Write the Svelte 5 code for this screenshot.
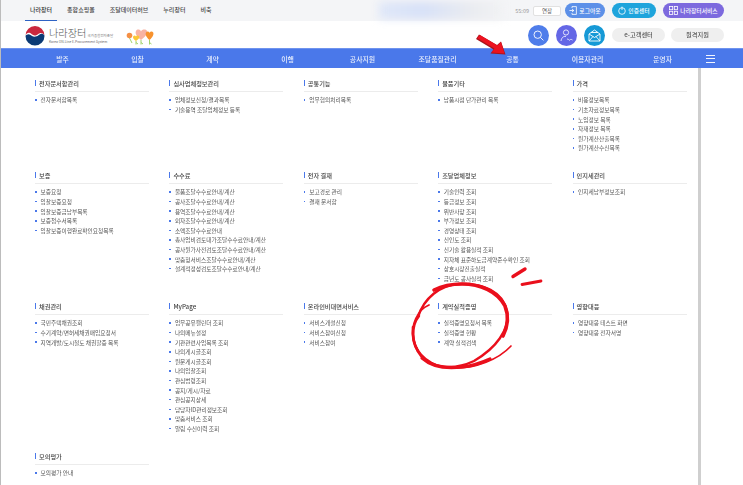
<script>
  const tabs = ["나라장터", "종합쇼핑몰", "조달데이터허브", "누리장터", "비축"];
  const nav = ["발주", "입찰", "계약", "이행", "공사지원", "조달품질관리", "공통", "이용자관리", "운영자"];

  const groups = [
    { title: "전자문서함관리", items: ["전자문서함목록"] },
    { title: "심사업체정보관리", items: ["업체정보신청/결과목록", "기술용역 조달업체정보 등록"] },
    { title: "공통기능", items: ["업무협의처리목록"] },
    { title: "물품기타", items: ["납품시점 단가관리 목록"] },
    { title: "가격", items: ["비용정보목록", "기초자료정보목록", "노임정보 목록", "자재정보 목록", "원가계산산출목록", "원가계산수신목록"] },
    { title: "보증", items: ["보증요청", "입찰보증요청", "입찰보증금납부목록", "보증접수서목록", "입찰보증이행완료확인요청목록"] },
    {
      title: "수수료",
      items: [
        "물품조달수수료안내/계산",
        "공사조달수수료안내/계산",
        "용역조달수수료안내/계산",
        "외자조달수수료안내/계산",
        "소액조달수수료안내",
        "총사업비검토대가조달수수료안내/계산",
        "공사원가사전검토조달수수료안내/계산",
        "맞춤형서비스조달수수료안내/계산",
        "설계적정성검토조달수수료안내/계산"
      ]
    },
    { title: "전자 결재", items: ["보고경로 관리", "결재 문서함"] },
    {
      title: "조달업체정보",
      items: [
        "기술인력 조회",
        "등급정보 조회",
        "위반사항 조회",
        "부가정보 조회",
        "경영상태 조회",
        "신인도 조회",
        "신기술 활용실적 조회",
        "지자체 표준하도급계약준수확인 조회",
        "상호시장진출실적",
        "금년도 공사실적 조회"
      ]
    },
    { title: "인지세관리", items: ["인지세납부정보조회"] },
    { title: "채권관리", items: ["국민주택채권조회", "수기계약/면허세채권매입요청서", "지역개발/도시철도 채권할증 목록"] },
    {
      title: "MyPage",
      items: [
        "업무공유캘린더 조회",
        "나의메뉴설정",
        "기관관련사업목록 조회",
        "나의게시글조회",
        "원문게시글조회",
        "나의입찰조회",
        "관심법령조회",
        "공지/게시/자료",
        "관심공지상세",
        "담당자ID관리정보조회",
        "맞춤서비스 조회",
        "알림 수신이력 조회"
      ]
    },
    { title: "온라인비대면서비스", items: ["서비스개설신청", "서비스참여신청", "서비스참여"] },
    { title: "계약실적증명", items: ["실적증명요청서 목록", "실적증명 현황", "계약 실적검색"] },
    { title: "영향대응", items: ["영향대응 테스트 화면", "영향대응 전자서명"] },
    { title: "모의평가", items: ["모의평가 안내"] }
  ];
</script>

<div class="page">
  <div class="topbar">
    <div class="tabs">
      {#each tabs as tab, i}
        <span class="tab" class:active={i === 0}>{tab}</span>
      {/each}
    </div>
    <div class="hidden-name"></div>
    <div class="session">
      <span class="timer">55:09</span>
      <span class="extend">연장</span>
      <span class="pill logout">
        <svg width="8" height="9" viewBox="0 0 8 9" fill="none" stroke="#fff" stroke-width="0.8">
          <path d="M3 2V.6h4.4v7.8H3V7M.4 4.5h4.4M3 3l1.8 1.5L3 6" />
        </svg>
        로그아웃
      </span>
      <span class="pill cert">
        <svg width="8" height="9" viewBox="0 0 8 9" fill="none" stroke="#fff" stroke-width="0.8">
          <circle cx="4" cy="5" r="3.3" />
          <path d="M4 .6V4" />
        </svg>
        인증센터
      </span>
      <span class="pill service">
        <svg width="9" height="9" viewBox="0 0 9 9" fill="none" stroke="#fff" stroke-width="0.8">
          <rect x=".5" y=".5" width="3.2" height="3.2" />
          <rect x="5.3" y=".5" width="3.2" height="3.2" />
          <rect x=".5" y="5.3" width="3.2" height="3.2" />
          <rect x="5.3" y="5.3" width="3.2" height="3.2" />
        </svg>
        나라장터서비스
      </span>
    </div>
  </div>

  <header class="header">
    <div class="logo">
      <svg class="emblem" width="20" height="20" viewBox="0 0 20 20">
        <circle cx="10" cy="10" r="9.5" fill="#fff" />
        <path d="M.6 9.5A9.4 9.4 0 0 1 19.4 9.5C18.6 7.4 16.6 6.6 14.8 7.2 13 7.8 12.4 9 10.6 9.4 7.6 10 6.4 7.2 4.4 6.8 2.6 6.5 1.2 7.6.6 9.5Z" fill="#c9283e" />
        <path d="M.5 10A9.5 9.5 0 0 0 19.5 10C19.4 8.6 18 7.6 16.2 7.8 14.4 8 13.6 10 10.8 10.6 7.4 11.2 6.2 8.6 4.4 8.4 2.4 8.2 .9 9 .5 10Z" fill="#0b3a75" />
      </svg>
      <div class="wordmark">
        <div class="wordmark-top"><span class="brand">나라장터</span><span class="brand-sub">국가종합전자조달</span></div>
        <div class="brand-en">Korea ON-Line E-Procurement System</div>
      </div>
      <svg class="flowers" width="28" height="17" viewBox="0 0 28 17">
        <path d="M10 13V16.500M15 12V16.500M23.500 12V16.500M3.500 10 6 15M12 16 10 14.500M17 16 15 14.500M25.500 16 23.500 14.500" stroke="#a2d36c" stroke-width="1" fill="none" />
        <path d="M15 12C10 8 9 5 10 3 11 1 14 1 15 3.500 16 1 20 1 21 3 22 5 20 8 15 12Z" fill="#f8b3a3" />
        <path d="M23.500 12C20 9 19 6 20 4.500 21 3 23 3 23.500 5 24 3 26.500 3 27.200 4.500 28 6 27 9 23.500 12Z" fill="#f7922e" />
        <path d="M10 13C7 11 6.500 9 7.500 8 8.500 7 9.500 7.500 10 8.500 10.500 7.500 12 7 13 8 14 9 13 11 10 13Z" fill="#fcc734" />
        <circle cx="3.500" cy="7.500" r="2.800" fill="#f58f45" />
      </svg>
    </div>
    <div class="tools">
      <span class="round search">
        <svg width="11" height="11" viewBox="0 0 11 11" fill="none" stroke="#fff" stroke-width="0.9">
          <circle cx="4.700" cy="4.700" r="3.700" />
          <path d="M7.500 7.500 10.400 10.400" />
        </svg>
      </span>
      <span class="round user">
        <svg width="13" height="13" viewBox="0 0 13 13" fill="none" stroke="#fff" stroke-width="0.8">
          <circle cx="6" cy="3.500" r="2.600" />
          <path d="M1 12C1.500 8.500 3.500 7 6 7.500M7 10.500C8 9.500 8.500 10.500 9 11 9.500 11.500 10 11 10.500 10.500 11 10 11.500 10.500 12.500 11" />
        </svg>
      </span>
      <span class="round mail">
        <svg width="13" height="13" viewBox="0 0 13 13" fill="none" stroke="#fff" stroke-width="0.9">
          <path d="M1 5 6.500 1 12 5V12H1ZM1 5 6.500 8.500 12 5M1 12 5 7.500M12 12 8 7.500" />
          <path d="M3 3.500H10" />
        </svg>
      </span>
      <span class="soft first">e-고객센터</span>
      <span class="soft">원격지원</span>
    </div>
  </header>

  <nav class="nav">
    {#each nav as item}
      <span class="nav-item">{item}</span>
    {/each}
    <span class="burger"><i></i><i></i><i></i></span>
  </nav>

  <main class="menu">
    {#each groups as group}
      <section class="group">
        <h3>{group.title}</h3>
        <ul>
          {#each group.items as item}
            <li>{item}</li>
          {/each}
        </ul>
      </section>
    {/each}
  </main>

  <!-- red pen marks drawn over the screenshot -->
  <svg class="marks" width="743" height="485" viewBox="0 0 743 485" fill="none" stroke="#ea0f1c" stroke-linecap="round">
    <path d="M479 34.500 497 45 501 41.500 505.500 54.500 490.500 53.500 493.500 49.500 476 39Z" fill="#a8141c" stroke="none" />
    <path d="M480 35 497.500 45.500 501 42 504.500 53.500 491.500 52.500 494.500 48.500 477 38Z" fill="#ec1220" stroke="none" />
    <path d="M418 317C424 298 440 285 459 284 483 282.500 503 292 507 311 510 330 496 348 474 361 455 370 432 369 421 356 411 343 411 326 419 316" stroke-width="2.400" />
    <path d="M434 290C444 285 452 284 462 284 480 284 497 291 505 306 509 316 508 326 503 336" stroke-width="3.600" />
    <path d="M429 305C417 310 411 325 413 338 416 354 431 367 452 368 476 369 499 359 511 346" stroke-width="1.700" />
    <path d="M422 358C432 367 446 369 462 367 472 366 481 363 490 359" stroke-width="3.200" />
    <path d="M413 327C412 338 414 345 418 351" stroke-width="2.600" />
    <path d="M513 276.500 525 269" stroke-width="3.400" />
    <path d="M522 284.500 541 281" stroke-width="2.800" />
  </svg>
</div>

<style>
  :global(body) {
    margin: 0;
    background: #fff;
  }

  .page {
    position: relative;
    width: 743px;
    height: 485px;
    overflow: hidden;
    box-sizing: border-box;
    border-left: 1px solid #bcbcbc;
    font-family: "Noto Sans CJK KR", "Noto Sans", sans-serif;
    color: #444;
    filter: blur(0.4px);
  }

  .topbar {
    position: relative;
    display: flex;
    justify-content: space-between;
    align-items: flex-start;
    height: 21px;
    background: #f4f5f7;
    padding-right: 19px;
  }

  .tabs {
    display: flex;
    gap: 5px;
    padding-left: 24px;
  }

  .tab {
    height: 20px;
    line-height: 20px;
    padding: 0 5px;
    font-size: 6px;
    font-weight: 500;
    color: #444;
  }

  .tab.active {
    border-bottom: 1px solid #2f63c4;
    color: #333;
  }

  .hidden-name {
    position: absolute;
    left: 378px;
    top: 2px;
    width: 124px;
    height: 17px;
    background: linear-gradient(90deg, #dfe7f8, #d6e0f7 35%, #e9ebef 75%, #f1f2f4);
    filter: blur(4px);
  }

  .session {
    display: flex;
    align-items: center;
    height: 21px;
  }

  .timer {
    font-size: 5.500px;
    color: #999;
    margin-right: 4px;
  }

  .extend {
    box-sizing: border-box;
    width: 28px;
    height: 10px;
    line-height: 8px;
    margin-right: 4px;
    text-align: center;
    font-size: 5.500px;
    color: #555;
    background: #fff;
    border: 1px solid #e1e1e1;
    border-radius: 2px;
  }

  .pill {
    display: flex;
    align-items: center;
    justify-content: center;
    gap: 2px;
    height: 15px;
    border-radius: 8px;
    font-size: 5.800px;
    font-weight: 500;
    color: #fff;
  }

  .logout {
    width: 40px;
    margin-right: 7px;
    background: #5c90e8;
  }

  .cert {
    width: 44px;
    margin-right: 7px;
    background: #1ea4dc;
  }

  .service {
    width: 61px;
    background: #7c69de;
  }

  .header {
    display: flex;
    justify-content: space-between;
    align-items: center;
    height: 27px;
    padding: 0 19px 0 24px;
    background: #fff;
  }

  .logo {
    display: flex;
    align-items: center;
  }

  .emblem {
    margin-top: 3px;
  }

  .wordmark {
    margin: 2px 0 0 4px;
    width: 70px;
    color: #555;
  }

  .wordmark-top {
    display: flex;
    align-items: flex-end;
    height: 12px;
  }

  .brand {
    font-size: 10.200px;
    font-weight: 300;
    line-height: 12px;
    color: #555;
  }

  .brand-sub {
    font-size: 3.500px;
    line-height: 6px;
    margin-left: 1px;
    white-space: nowrap;
    color: #777;
  }

  .brand-en {
    font-size: 3.300px;
    line-height: 5px;
    white-space: nowrap;
    color: #666;
  }

  .flowers {
    margin: 4px 0 0 7px;
  }

  .tools {
    display: flex;
    align-items: center;
    margin-top: 1px;
  }

  .round {
    display: flex;
    align-items: center;
    justify-content: center;
    width: 21px;
    height: 21px;
    margin-right: 7px;
    border-radius: 50%;
  }

  .search {
    background: #4f7dea;
  }

  .user {
    background: #6467e6;
  }

  .mail {
    background: #1699d6;
    margin-right: 0;
  }

  .soft {
    width: 53px;
    height: 14px;
    line-height: 14px;
    text-align: center;
    font-size: 6.200px;
    font-weight: 500;
    color: #555;
    background: #efefef;
    border-radius: 7px;
    margin-left: 6px;
  }

  .soft.first {
    margin-left: 7px;
  }

  .nav {
    display: flex;
    align-items: center;
    height: 20px;
    padding-left: 24px;
    background: #4a78ea;
    border-top: 1px solid #6f93ee;
    box-sizing: border-box;
  }

  .nav-item {
    width: 75px;
    text-align: center;
    font-size: 6.900px;
    font-weight: 500;
    color: #e8eefc;
  }

  .burger {
    display: flex;
    flex-direction: column;
    gap: 2.500px;
    width: 9px;
    margin-left: 6px;
  }

  .burger i {
    height: 1px;
    background: #f2f5fe;
  }

  .menu {
    box-sizing: border-box;
    width: 700px;
    height: 417px;
    padding: 10px 0 0 34px;
    border-right: 3px solid #cfcfcf;
    display: grid;
    grid-template-columns: repeat(5, 114px);
    grid-template-rows: 92px 131px 150px auto;
    column-gap: 20.400px;
  }

  h3 {
    display: flex;
    align-items: center;
    height: 10px;
    margin: 0;
    padding-bottom: 3px;
    border-bottom: 1px solid #ececec;
    font-size: 6.200px;
    font-weight: 500;
    color: #444;
    white-space: nowrap;
  }

  h3::before {
    content: "";
    width: 1px;
    height: 6px;
    margin-right: 3px;
    background: #4a78ea;
  }

  ul {
    list-style: none;
    margin: 3.200px 0 0;
    padding: 0;
  }

  li {
    display: flex;
    align-items: center;
    height: 9.600px;
    font-size: 5.700px;
    color: #555;
    white-space: nowrap;
  }

  li::before {
    content: "";
    flex: none;
    width: 1.500px;
    height: 1.500px;
    margin-right: 4px;
    background: #4a78ea;
  }

  .marks {
    position: absolute;
    left: -1px;
    top: 0;
    pointer-events: none;
  }
</style>
